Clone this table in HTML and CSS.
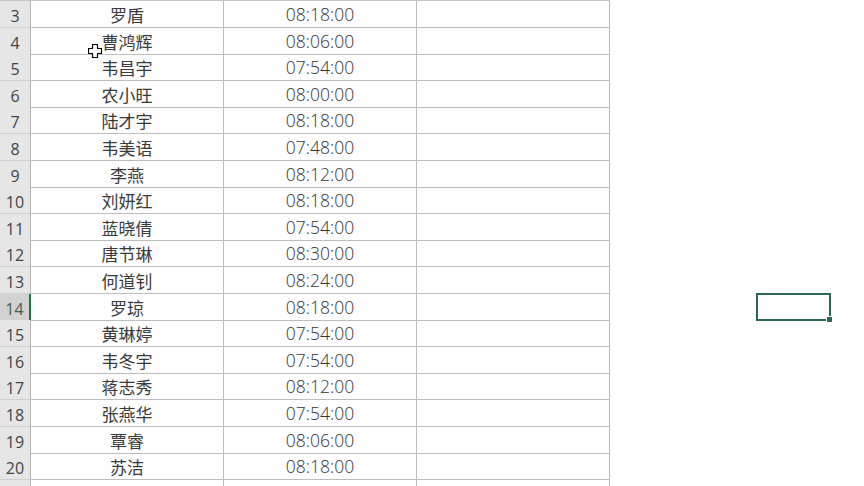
FILE: index.html
```html
<!DOCTYPE html>
<html lang="zh">
<head>
<meta charset="utf-8">
<link rel="stylesheet" href="styles.css">
</head>
<body>
<div class="canvas">
  <div class="sheet">
    <div class="row"><div class="hd">3</div><div class="c name">罗盾</div><div class="c time">08:18:00</div><div class="c"></div></div>
    <div class="row"><div class="hd">4</div><div class="c name">曹鸿辉</div><div class="c time">08:06:00</div><div class="c"></div></div>
    <div class="row"><div class="hd">5</div><div class="c name">韦昌宇</div><div class="c time">07:54:00</div><div class="c"></div></div>
    <div class="row"><div class="hd">6</div><div class="c name">农小旺</div><div class="c time">08:00:00</div><div class="c"></div></div>
    <div class="row"><div class="hd">7</div><div class="c name">陆才宇</div><div class="c time">08:18:00</div><div class="c"></div></div>
    <div class="row"><div class="hd">8</div><div class="c name">韦美语</div><div class="c time">07:48:00</div><div class="c"></div></div>
    <div class="row"><div class="hd">9</div><div class="c name">李燕</div><div class="c time">08:12:00</div><div class="c"></div></div>
    <div class="row"><div class="hd">10</div><div class="c name">刘妍红</div><div class="c time">08:18:00</div><div class="c"></div></div>
    <div class="row"><div class="hd">11</div><div class="c name">蓝晓倩</div><div class="c time">07:54:00</div><div class="c"></div></div>
    <div class="row"><div class="hd">12</div><div class="c name">唐节琳</div><div class="c time">08:30:00</div><div class="c"></div></div>
    <div class="row"><div class="hd">13</div><div class="c name">何道钊</div><div class="c time">08:24:00</div><div class="c"></div></div>
    <div class="row active"><div class="hd">14</div><div class="c name">罗琼</div><div class="c time">08:18:00</div><div class="c"></div></div>
    <div class="row"><div class="hd">15</div><div class="c name">黄琳婷</div><div class="c time">07:54:00</div><div class="c"></div></div>
    <div class="row"><div class="hd">16</div><div class="c name">韦冬宇</div><div class="c time">07:54:00</div><div class="c"></div></div>
    <div class="row"><div class="hd">17</div><div class="c name">蒋志秀</div><div class="c time">08:12:00</div><div class="c"></div></div>
    <div class="row"><div class="hd">18</div><div class="c name">张燕华</div><div class="c time">07:54:00</div><div class="c"></div></div>
    <div class="row"><div class="hd">19</div><div class="c name">覃睿</div><div class="c time">08:06:00</div><div class="c"></div></div>
    <div class="row"><div class="hd">20</div><div class="c name">苏洁</div><div class="c time">08:18:00</div><div class="c"></div></div>
    <div class="row"><div class="hd"></div><div class="c name"></div><div class="c time"></div><div class="c"></div></div>
  </div>
  <div class="selection"><span class="handle"></span></div>
  <svg class="cursor" width="14" height="14" viewBox="0 0 14 14">
    <path d="M4.5 0.5h5v4h4v5h-4v4h-5v-4h-4v-5h4z" fill="#fff" stroke="#000" stroke-width="1.2" stroke-linejoin="round"/>
  </svg>
</div>
</body>
</html>
```
FILE: styles.css
```css
html, body {
  margin: 0;
  padding: 0;
  background: #fff;
  overflow: hidden;
}
.canvas {
  position: relative;
  width: 864px;
  height: 486px;
  overflow: hidden;
}
.sheet {
  display: flex;
  flex-direction: column;
  width: 610px;
  border-top: 1px solid #c4c4c4;
}
.row {
  display: grid;
  grid-template-columns: 31px 193px 193px 193px;
  height: 26.6px;
  box-sizing: border-box;
}
.hd {
  background: #e6e6e6;
  border-right: 1px solid #b4b4b4;
  border-bottom: 1px solid #d0d0d0;
  box-sizing: border-box;
  font-family: "Open Sans", "Liberation Sans", sans-serif;
  font-size: 16px;
  color: #444;
  display: flex;
  align-items: center;
  justify-content: center;
  padding-top: 4px;
}
.c {
  border-right: 1px solid #bdbdbd;
  border-bottom: 1px solid #bdbdbd;
  box-sizing: border-box;
  display: flex;
  align-items: center;
  justify-content: center;
  color: #3a3a3a;
}
.name {
  font-family: "Noto Sans CJK SC", sans-serif;
  font-size: 17px;
  padding-top: 1px;
}
.time {
  font-family: "Open Sans", "Liberation Sans", sans-serif;
  font-size: 17.5px;
  font-weight: 300;
  color: #333;
  padding-top: 0;
}
.active .hd {
  background: #d2d2d2;
  color: #3f6150;
  border-right: 2px solid #217346;
}
.selection {
  position: absolute;
  left: 756px;
  top: 293px;
  width: 75px;
  height: 28px;
  box-sizing: border-box;
  border: 2px solid #2b6a50;
}
.handle {
  position: absolute;
  right: -4px;
  bottom: -4px;
  width: 5px;
  height: 5px;
  background: #2b6a50;
  border: 1px solid #fff;
}
.cursor {
  position: absolute;
  left: 88px;
  top: 44px;
}
```
